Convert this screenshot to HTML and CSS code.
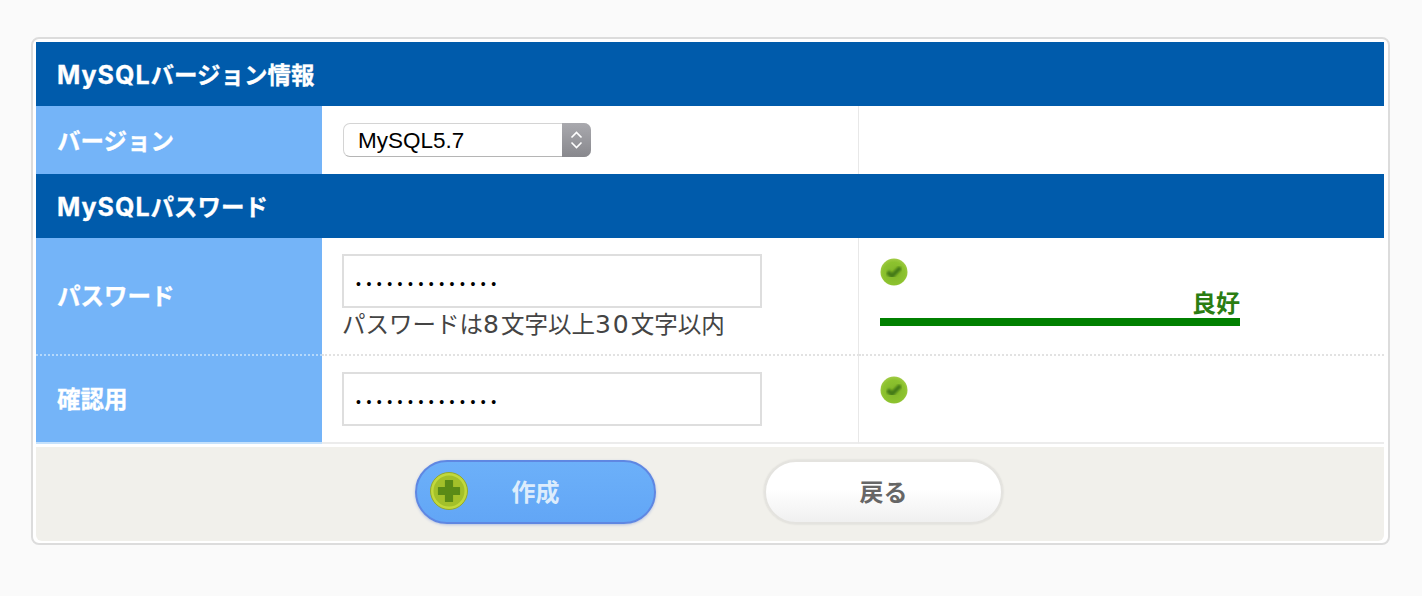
FILE: index.html
```html
<!DOCTYPE html>
<html lang="ja">
<head>
    <meta charset="UTF-8">
    <meta name="viewport" content="width=device-width, initial-scale=1.0">
    <title>MySQL</title>
    <link rel="stylesheet" href="styles.css">
</head>
<body>
    <div class="panel">
        <table class="form-table">
            <colgroup>
                <col class="col-label">
                <col class="col-field">
                <col>
            </colgroup>
            <tr>
                <th class="section" colspan="3"><span class="latin">MySQL</span>バージョン情報</th>
            </tr>
            <tr class="row-version">
                <th class="label">バージョン</th>
                <td class="field">
                    <div class="select-wrap">
                        <select class="select">
                            <option>MySQL5.7</option>
                        </select>
                        <span class="select-arrows">
                            <svg width="15" height="22" viewBox="0 0 15 22">
                                <path d="M2.500 8.500 7.500 3.500 12.500 8.500M2.500 13.500 7.500 18.500 12.500 13.500" fill="none" stroke="#fff" stroke-width="1.600"/>
                            </svg>
                        </span>
                    </div>
                </td>
                <td class="status"></td>
            </tr>
            <tr>
                <th class="section" colspan="3"><span class="latin">MySQL</span>パスワード</th>
            </tr>
            <tr class="row-password">
                <th class="label">パスワード</th>
                <td class="field">
                    <input class="input" type="password" value="aaaaaaaaaaaaaa">
                    <div class="hint">パスワードは<span class="num">8</span>文字以上<span class="num">30</span>文字以内</div>
                </td>
                <td class="status">
                    <svg class="check" width="28" height="28" viewBox="0 0 28 28">
                        <defs>
                            <radialGradient id="ball" cx="0.5" cy="0.55" r="0.55">
                                <stop offset="0" stop-color="#80b52a"/>
                                <stop offset="0.75" stop-color="#8cc22e"/>
                                <stop offset="1" stop-color="#a2cb46"/>
                            </radialGradient>
                            <filter id="soft">
                                <feGaussianBlur stdDeviation="0.8"/>
                            </filter>
                            <filter id="soft-plus">
                                <feGaussianBlur stdDeviation="0.5"/>
                            </filter>
                        </defs>
                        <circle cx="14" cy="14" r="13.500" fill="url(#ball)"/>
                        <path d="M7.500 14 12 18 20.500 9.500" fill="none" stroke="#447a18" stroke-width="4.500" filter="url(#soft)"/>
                    </svg>
                    <div class="strength">
                        <span class="strength-text">良好</span>
                        <div class="strength-bar"></div>
                    </div>
                </td>
            </tr>
            <tr class="row-confirm">
                <th class="label">確認用</th>
                <td class="field">
                    <input class="input" type="password" value="aaaaaaaaaaaaaa">
                </td>
                <td class="status">
                    <svg class="check" width="28" height="28" viewBox="0 0 28 28">
                        <circle cx="14" cy="14" r="13.500" fill="url(#ball)"/>
                        <path d="M7.500 14 12 18 20.500 9.500" fill="none" stroke="#447a18" stroke-width="4.500" filter="url(#soft)"/>
                    </svg>
                </td>
            </tr>
        </table>
        <div class="actions">
            <button class="btn btn-create">
                <svg class="btn-icon" width="38" height="38" viewBox="0 0 38 38">
                    <circle cx="19" cy="19" r="18.500" fill="#c2d93c" stroke="#93a82c"/>
                    <circle cx="19" cy="19" r="15.500" fill="#a3c02a"/>
                    <path d="M15.500 8.500h7v7H29.500v7h-7v7h-7v-7h-7v-7h7z" fill="#5a8a18" stroke="#5a8a18" stroke-width="1.200" stroke-linejoin="round" filter="url(#soft-plus)"/>
                </svg>
                作成
            </button>
            <button class="btn btn-back">戻る</button>
        </div>
    </div>
</body>
</html>
```

FILE: styles.css
```css
html, body {
    margin: 0;
    padding: 0;
}
body {
    background: #fafafa;
    padding: 37px 32px 0 31px;
    font-family: "Liberation Sans", "Noto Sans CJK JP", sans-serif;
}
.panel {
    background: #fff;
    border: 2px solid #dcdcdc;
    border-radius: 8px;
    padding: 3px 4px 2px 3px;
}
.form-table {
    width: 100%;
    table-layout: fixed;
    border-collapse: separate;
    border-spacing: 0;
}
.col-label {
    width: 286px;
}
.col-field {
    width: 537px;
}
.section {
    height: 64px;
    padding: 0 0 0 21px;
    box-sizing: border-box;
    background: #005bab;
    color: #fff;
    font-size: 23.5px;
    font-weight: bold;
    text-align: left;
    -webkit-text-stroke: 0.3px #fff;
}
.latin {
    font-family: "Inter", "Liberation Sans", sans-serif;
    font-size: 25px;
    letter-spacing: 1px;
}
.label {
    padding: 0 0 2px 21px;
    box-sizing: border-box;
    background: #74b4f8;
    color: #fff;
    font-size: 23.5px;
    font-weight: bold;
    text-align: left;
    -webkit-text-stroke: 0.3px #fff;
}
.field {
    padding: 0 0 0 20px;
    border-right: 1px solid #e8e8e8;
    vertical-align: top;
}
.status {
    padding: 0 0 0 21px;
    vertical-align: top;
}
.row-version th, .row-version td {
    height: 68px;
}
.row-version th {
    padding-bottom: 0;
}
.row-version .field {
    vertical-align: middle;
}
.row-password th, .row-password td {
    height: 116px;
    padding-top: 16px;
    box-sizing: border-box;
}
.row-password th {
    padding-top: 0;
}
.row-confirm th, .row-confirm td {
    height: 90px;
    box-sizing: border-box;
    border-top: 2px dotted #e2e2e2;
    border-bottom: 2px solid #ececec;
    padding-top: 16px;
}
.row-confirm th {
    padding-top: 0;
    padding-bottom: 2px;
    border-top-color: #b4d8fb;
    border-bottom-color: #c6e2fc;
}
.select-wrap {
    position: relative;
    width: 248px;
    height: 34px;
    margin-left: 1px;
}
.select {
    appearance: none;
    display: block;
    width: 100%;
    height: 100%;
    padding: 0 0 0 14px;
    border: 1px solid #d4d4d4;
    border-bottom-color: #b5b5b5;
    border-radius: 7px;
    background: #fff;
    color: #000;
    font-family: "Liberation Sans", sans-serif;
    font-size: 22.5px;
}
.select-arrows {
    position: absolute;
    top: 0;
    right: 0;
    width: 29px;
    height: 34px;
    display: flex;
    align-items: center;
    justify-content: center;
    border-radius: 0 7px 7px 0;
    background: linear-gradient(#a9a9ae, #88888d);
}
.input {
    display: block;
    box-sizing: border-box;
    width: 420px;
    height: 54px;
    padding: 6px 12px 0;
    border: 2px solid #dedede;
    background: #fff;
    color: #000;
    font-family: "Liberation Sans", sans-serif;
    font-size: 14px;
    letter-spacing: 5.5px;
}
.hint {
    color: #444;
    font-size: 23.5px;
    line-height: 34px;
}
.num {
    font-family: "DejaVu Sans", "Liberation Sans", sans-serif;
    font-size: 25px;
    letter-spacing: 2px;
}
.check {
    display: block;
    margin-top: 4px;
}
.strength {
    width: 360px;
    margin-top: 4px;
    text-align: right;
}
.strength-text {
    display: block;
    color: #2a7d12;
    font-size: 24px;
    font-weight: bold;
    line-height: 28px;
}
.strength-bar {
    height: 8px;
    background: #008000;
}
.actions {
    display: flex;
    justify-content: center;
    align-items: center;
    gap: 108px;
    box-sizing: border-box;
    height: 94px;
    margin-top: 3px;
    padding: 0 2px 4px 0;
    background: #f1f0eb;
    border-radius: 0 0 6px 6px;
}
.btn {
    position: relative;
    box-sizing: border-box;
    height: 64px;
    padding: 0 0 4px;
    border-radius: 32px;
    font-family: "Liberation Sans", "Noto Sans CJK JP", sans-serif;
    font-size: 24px;
    font-weight: bold;
}
.btn-create {
    width: 241px;
    border: 2px solid #5f87e2;
    background: linear-gradient(#6cb0f9, #62a6f6);
    color: #dcecfc;
    box-shadow: 0 1px 3px #b4c2e0;
}
.btn-icon {
    position: absolute;
    left: 13px;
    top: 10px;
}
.btn-back {
    width: 239px;
    border: 2px solid #e4e3df;
    background: linear-gradient(#fff 45%, #f0f0f0);
    color: #666;
    box-shadow: 0 0 2px #cfcec9;
}
```
